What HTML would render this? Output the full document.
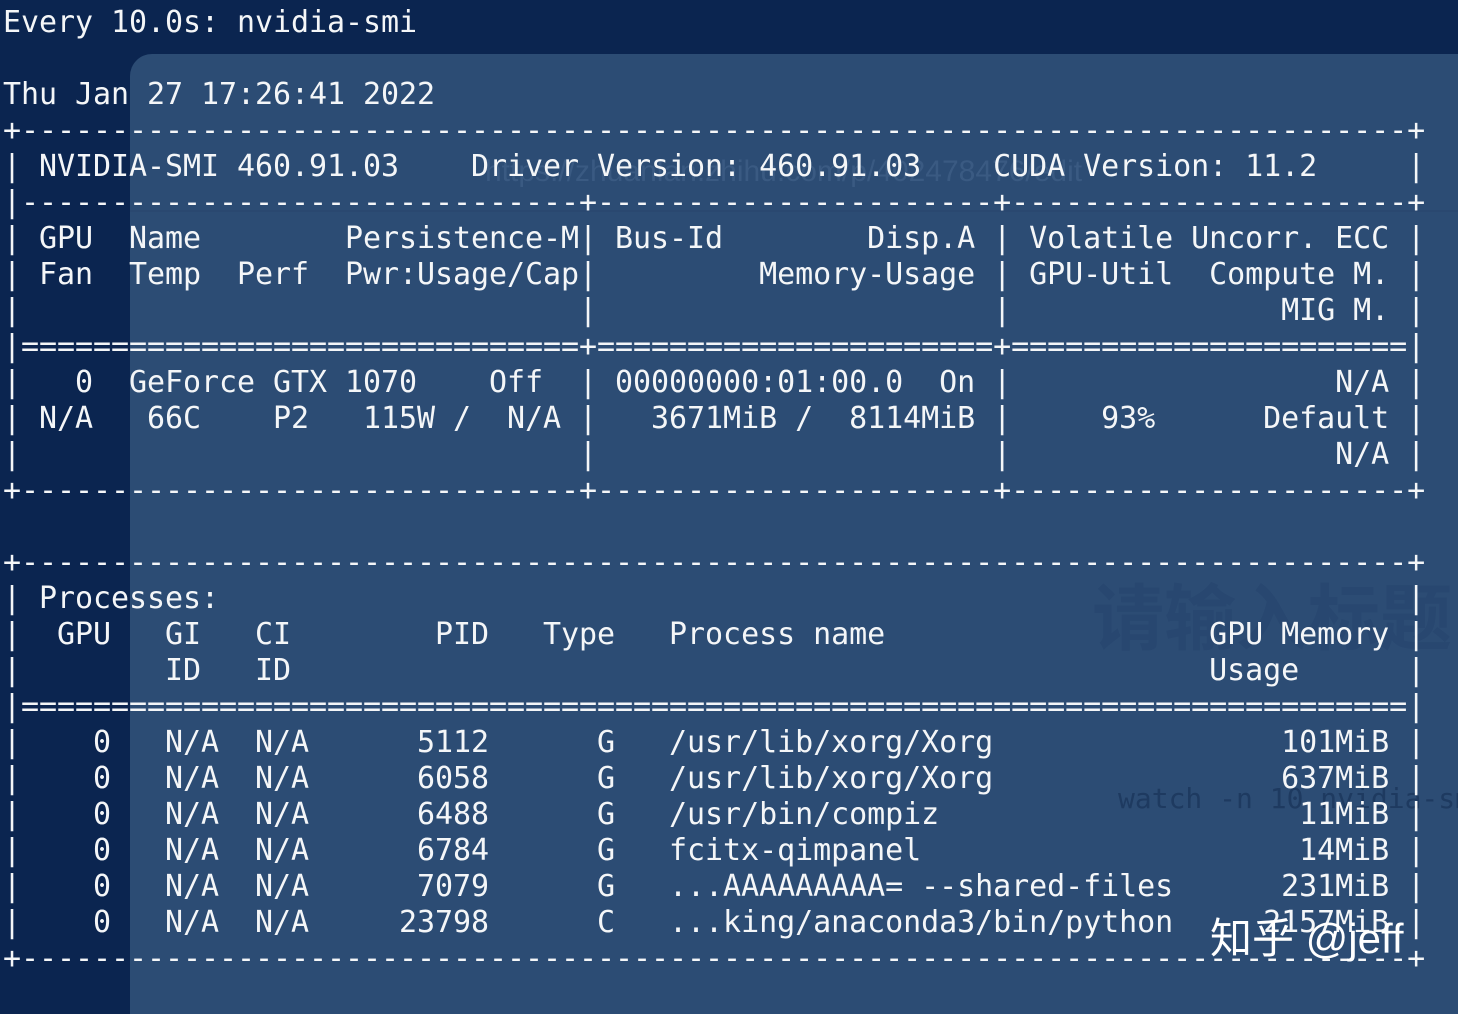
<!DOCTYPE html>
<html><head><meta charset="utf-8"><style>
html,body{margin:0;padding:0;width:1458px;height:1000px;overflow:hidden;background:#0b2550;}
.ov{position:absolute;left:130px;top:54px;width:1340px;height:960px;background:#2c4c74;border-top-left-radius:22px;}
.tb{position:absolute;left:130px;top:210px;width:1340px;height:2px;background:#2a4870;}
.ghost{position:absolute;white-space:nowrap;font-family:"Liberation Sans","Noto Sans CJK SC",sans-serif;color:#26456c;}
pre{position:absolute;left:3px;top:5px;margin:0;font-family:"DejaVu Sans Mono",monospace;font-size:30px;letter-spacing:-0.06px;line-height:36px;color:#f4f6f8;white-space:pre;}
.wm{position:absolute;left:1210px;top:905px;font-family:"Liberation Sans","Noto Sans CJK SC",sans-serif;font-size:42px;color:#fff;white-space:nowrap;}
</style></head><body>
<div class="ov"></div>
<div class="tb"></div>
<div class="ghost" style="left:485px;top:155px;font-size:30px;color:#3a5a82">https://zhuanlan.zhihu.com/p/402478476/edit</div>
<div class="ghost" style="left:1092px;top:560px;font-size:72px;font-weight:bold;color:#284770">请输入标题</div>
<div class="ghost" style="left:1118px;top:782px;font-size:28px;font-family:'DejaVu Sans Mono',monospace;color:#1e3a60">watch -n 10 nvidia-smi</div>
<pre>Every 10.0s: nvidia-smi

Thu Jan 27 17:26:41 2022
+-----------------------------------------------------------------------------+
| NVIDIA-SMI 460.91.03    Driver Version: 460.91.03    CUDA Version: 11.2     |
|-------------------------------+----------------------+----------------------+
| GPU  Name        Persistence-M| Bus-Id        Disp.A | Volatile Uncorr. ECC |
| Fan  Temp  Perf  Pwr:Usage/Cap|         Memory-Usage | GPU-Util  Compute M. |
|                               |                      |               MIG M. |
|===============================+======================+======================|
|   0  GeForce GTX 1070    Off  | 00000000:01:00.0  On |                  N/A |
| N/A   66C    P2   115W /  N/A |   3671MiB /  8114MiB |     93%      Default |
|                               |                      |                  N/A |
+-------------------------------+----------------------+----------------------+

+-----------------------------------------------------------------------------+
| Processes:                                                                  |
|  GPU   GI   CI        PID   Type   Process name                  GPU Memory |
|        ID   ID                                                   Usage      |
|=============================================================================|
|    0   N/A  N/A      5112      G   /usr/lib/xorg/Xorg                101MiB |
|    0   N/A  N/A      6058      G   /usr/lib/xorg/Xorg                637MiB |
|    0   N/A  N/A      6488      G   /usr/bin/compiz                    11MiB |
|    0   N/A  N/A      6784      G   fcitx-qimpanel                     14MiB |
|    0   N/A  N/A      7079      G   ...AAAAAAAAA= --shared-files      231MiB |
|    0   N/A  N/A     23798      C   ...king/anaconda3/bin/python     2157MiB |
+-----------------------------------------------------------------------------+</pre>
<div class="wm">知乎 @jeff</div>
</body></html>
